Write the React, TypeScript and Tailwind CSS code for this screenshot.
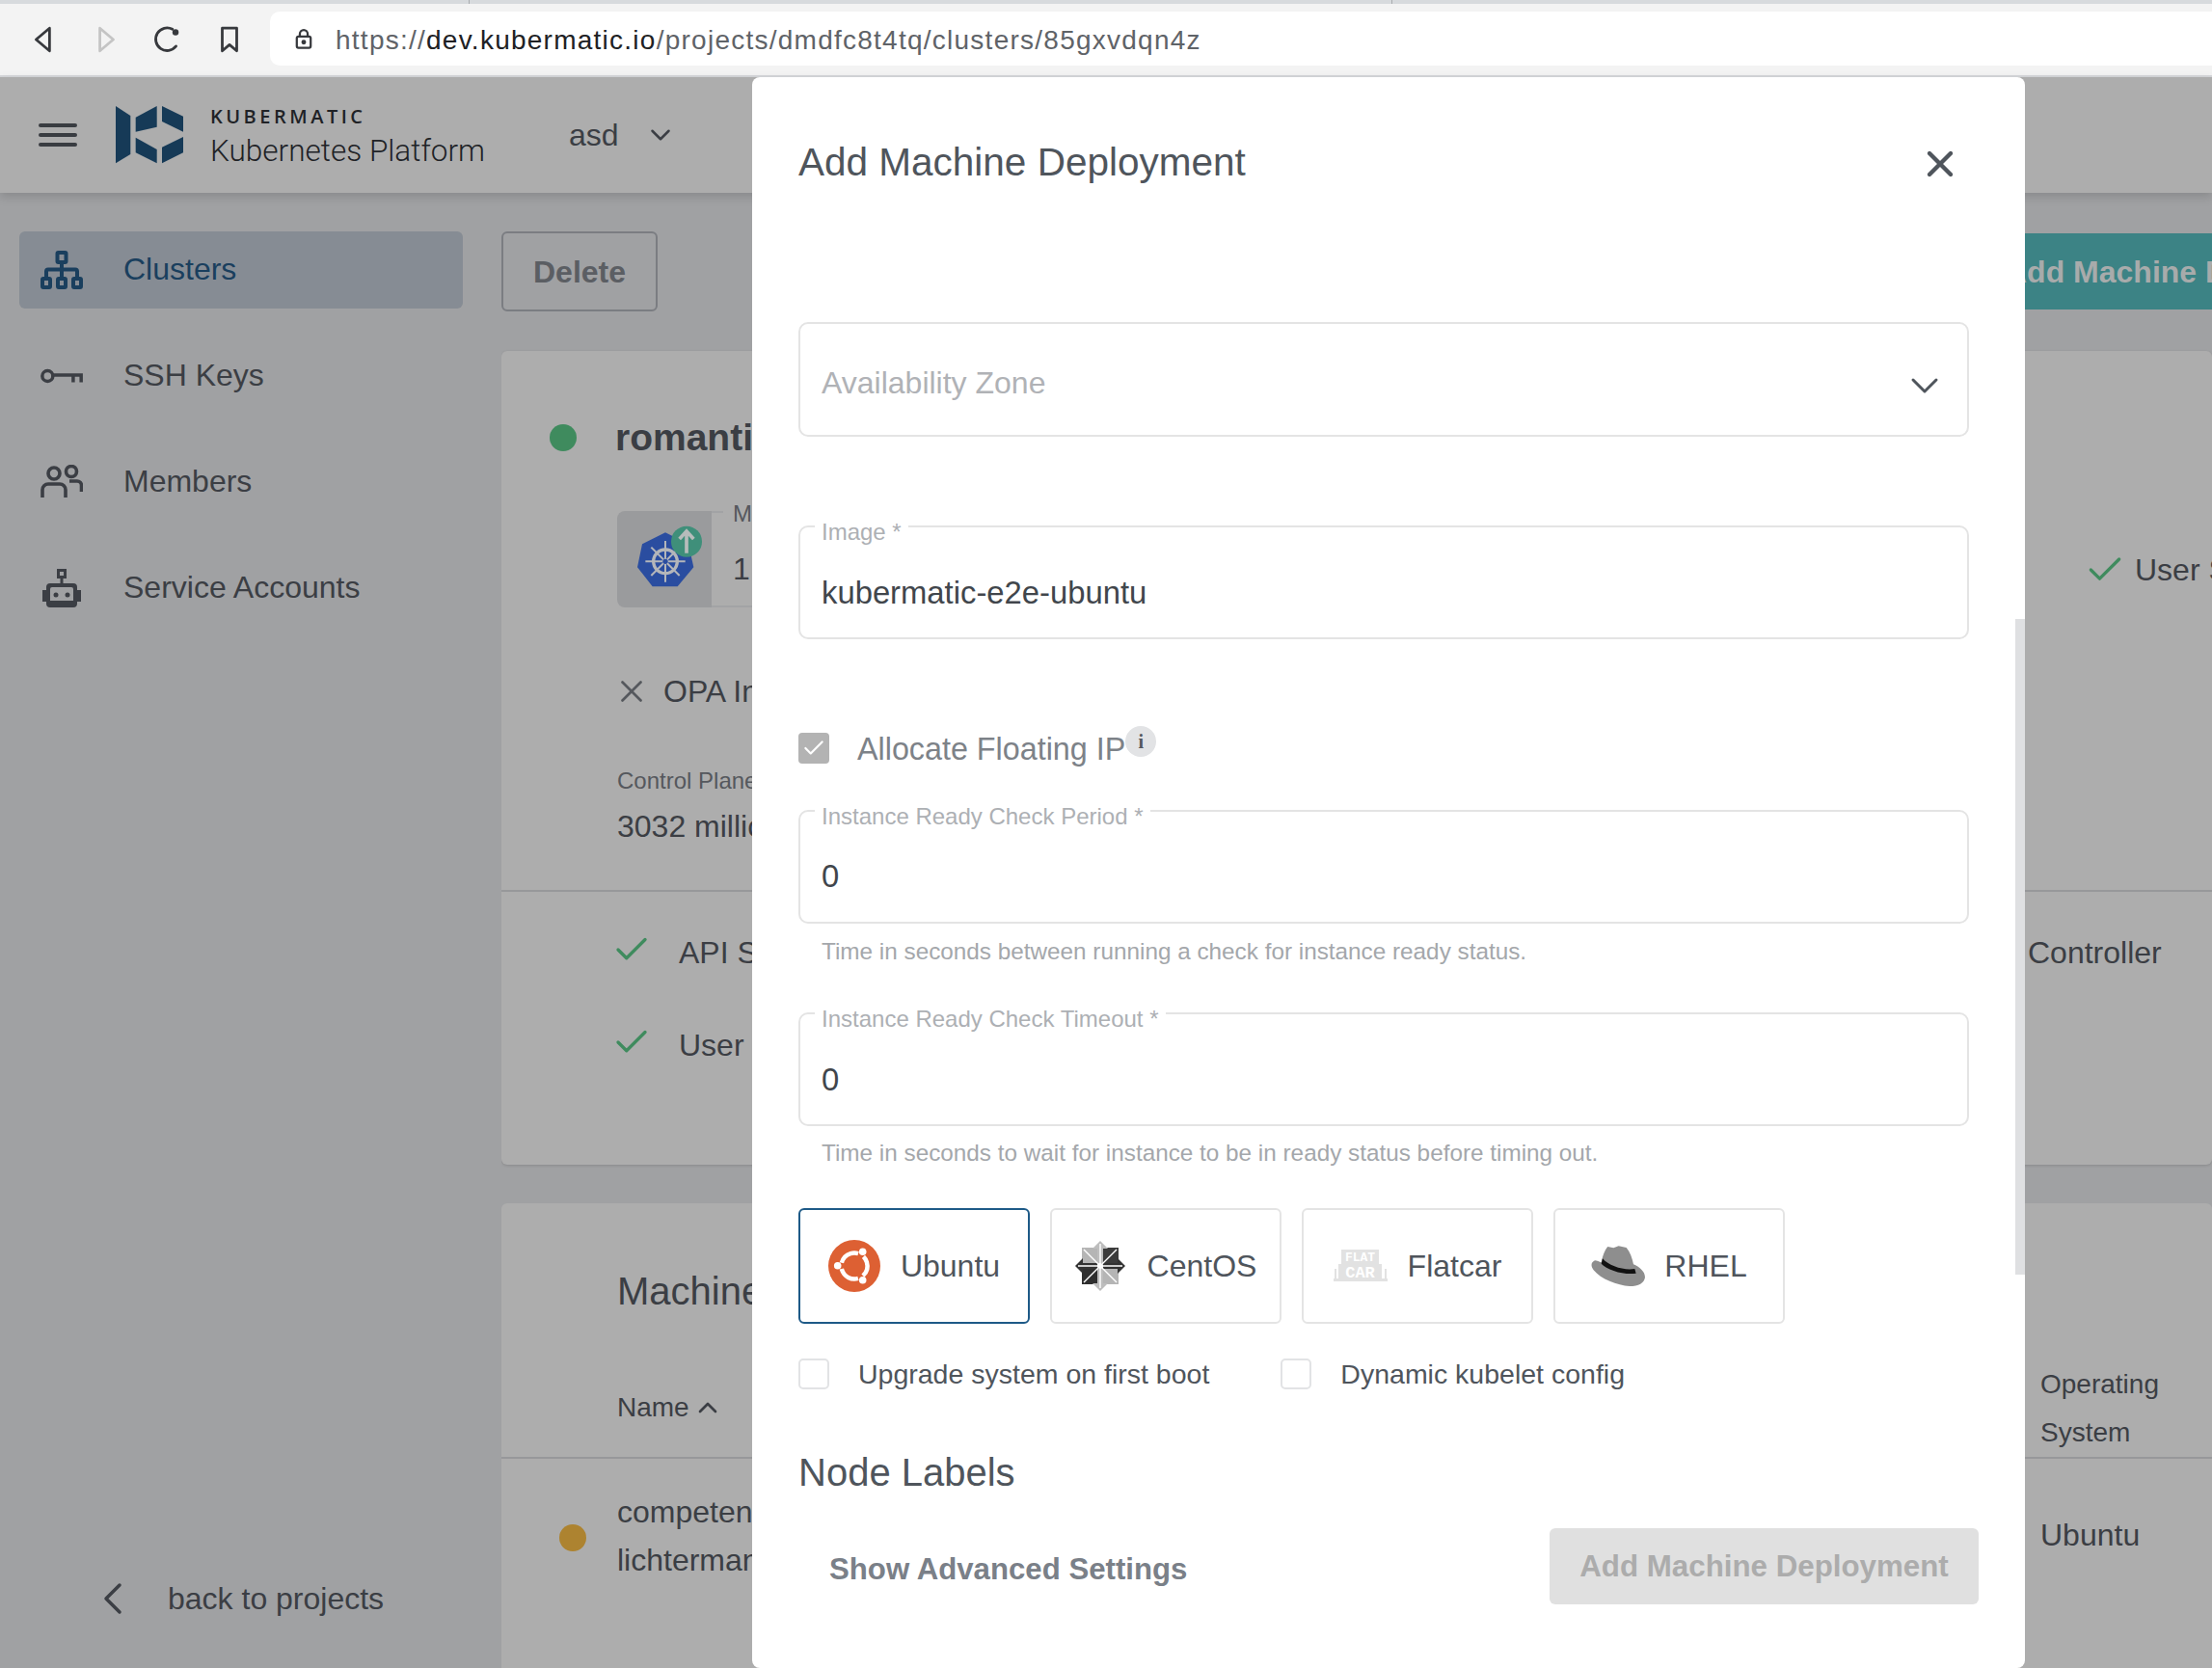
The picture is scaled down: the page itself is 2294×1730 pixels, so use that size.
import { ChevronDown, ChevronLeft, ChevronUp, Check, X } from "lucide-react";
import type { ReactNode } from "react";

const font = "font-['Liberation_Sans',Arial,sans-serif]";

const ClustersIcon = () => (
  <svg viewBox="0 0 44 40" className="w-[44px] h-[40px]" fill="none" stroke="currentColor" strokeWidth="4">
    <rect x="17.500" y="2" width="9" height="10" rx="1" />
    <path d="M22 12v17M6 29v-7.500a2 2 0 0 1 2-2h28a2 2 0 0 1 2 2V29" />
    <rect x="2" y="29" width="8" height="9" rx="1" />
    <rect x="18" y="29" width="8" height="9" rx="1" />
    <rect x="34" y="29" width="8" height="9" rx="1" />
  </svg>
);

const KeyIcon = () => (
  <svg viewBox="0 0 48 20" className="w-[48px] h-[20px]" fill="none" stroke="currentColor" strokeWidth="3.800">
    <circle cx="8" cy="10" r="6" />
    <path d="M14 9h32v8M37 9v8" />
  </svg>
);

const MembersIcon = () => (
  <svg viewBox="0 0 44 36" className="w-[44px] h-[36px]" fill="none" stroke="currentColor" strokeWidth="3.600">
    <circle cx="14" cy="9" r="6" />
    <circle cx="32" cy="7" r="5.500" />
    <path d="M2 34v-8a6 6 0 0 1 6-6h12a6 6 0 0 1 6 6v8M30 17h8a4.500 4.500 0 0 1 4.500 4.500V28" />
  </svg>
);

const RobotIcon = () => (
  <svg viewBox="0 0 44 40" className="w-[44px] h-[40px]" fill="currentColor">
    <path d="M17 0h10v10h-3.500v5H34a4 4 0 0 1 4 4v3h4v12h-4v2a4 4 0 0 1-4 4H10a4 4 0 0 1-4-4v-2H2V22h4v-3a4 4 0 0 1 4-4h10.500v-5H17z" />
    <rect x="20" y="3" width="4" height="4" fill="#a0a1a3" />
    <rect x="10" y="19" width="24" height="16" rx="2" fill="#a0a1a3" />
    <rect x="8" y="33" width="28" height="3" />
    <circle cx="16" cy="27" r="2.500" />
    <circle cx="28" cy="27" r="2.500" />
  </svg>
);

const Logo = () => (
  <svg viewBox="10 10 70 60" className="w-[70px] h-[60px]" fill="#163a57">
    <polygon points="10,10 25.300,20 25.300,60 10,69.300" />
    <polygon points="30.700,21.700 52.700,10 52.700,31.700 30.700,36.700" />
    <polygon points="58,10 80,20.700 80,36.700 58,26" />
    <polygon points="30.700,42.700 52.700,55 52.700,69.300 30.700,58.300" />
    <polygon points="58,52.700 80,42 80,58.300 58,69.300" />
  </svg>
);

const UbuntuLogo = () => (
  <svg viewBox="0 0 54 54" className="w-[54px] h-[54px] shrink-0">
    <circle cx="27" cy="27" r="27" fill="#dd6033" />
    <circle cx="27" cy="27" r="13.500" fill="none" stroke="#fff" strokeWidth="4.500" strokeDasharray="22 6.270" transform="rotate(73 27 27)" />
    <circle cx="35.700" cy="12.300" r="3.800" fill="#fff" />
    <circle cx="9.700" cy="26.700" r="3.800" fill="#fff" />
    <circle cx="35.700" cy="41.700" r="3.800" fill="#fff" />
  </svg>
);

const CentosLogo = () => (
  <svg viewBox="0 0 52 52" className="w-[52px] h-[52px] shrink-0">
    <rect x="7" y="7" width="18" height="18" fill="#b5b5b5" />
    <rect x="27" y="7" width="18" height="18" fill="#3c3c3c" />
    <rect x="7" y="27" width="18" height="18" fill="#2f2f2f" />
    <rect x="27" y="27" width="18" height="18" fill="#b5b5b5" />
    <polygon points="26,0 34,8 29,8 29,23 23,23 23,8 18,8" fill="#bdbdbd" />
    <polygon points="26,52 34,44 29,44 29,29 23,29 23,44 18,44" fill="#bdbdbd" />
    <polygon points="0,26 8,18 8,23 23,23 23,29 8,29 8,34" fill="#333" />
    <polygon points="52,26 44,18 44,23 29,23 29,29 44,29 44,34" fill="#333" />
    <path d="M26 3v46M3 26h46M9 9l34 34M43 9L9 43" stroke="#fff" strokeWidth="1.400" />
    <circle cx="26" cy="26" r="3" fill="#fff" />
  </svg>
);

const FlatcarLogo = () => (
  <svg viewBox="0 0 56 34" className="w-[56px] h-[34px] shrink-0">
    <rect x="8" y="0" width="39" height="15" fill="#e2e2e2" />
    <rect x="5" y="15" width="45" height="16" fill="#e2e2e2" />
    <rect x="0" y="30" width="56" height="3" fill="#e2e2e2" />
    <rect x="1" y="20" width="2" height="10" fill="#e2e2e2" />
    <rect x="53" y="20" width="2" height="10" fill="#e2e2e2" />
    <text x="27.500" y="12" textAnchor="middle" fontSize="13" fontWeight="700" fill="#fff" fontFamily="Liberation Mono, monospace">FLAT</text>
    <text x="27.500" y="28.500" textAnchor="middle" fontSize="17" fontWeight="700" fill="#fff" fontFamily="Liberation Mono, monospace">CAR</text>
  </svg>
);

const RhelLogo = () => (
  <svg viewBox="0 0 168 126" className="w-[56px] h-[42px] shrink-0">
    <path d="M52 3L70 7L86 1L110 6C122 20 128 38 132 58C150 66 168 80 168 98C166 116 148 126 120 126C82 124 30 104 8 76C-2 62 0 52 12 46C18 46 26 50 32 52C36 34 42 14 52 3Z" fill="#8e8e8e" />
    <path d="M36 40C56 64 104 78 136 72L140 86C104 92 50 76 32 56Z" fill="#111" />
  </svg>
);

const KubeIcon = () => (
  <svg viewBox="90 60 210 195" className="w-[70px] h-[65px]">
    <polygon points="180,82 252,118 268,190 218,250 140,250 93,190 108,118" fill="#2a4da0" />
    <g stroke="#b4b6ba" fill="none">
      <circle cx="180" cy="172" r="37" strokeWidth="10" />
      <path d="M180 108v128M118 172h124M136 128l88 88M224 128l-88 88" strokeWidth="6" />
    </g>
    <circle cx="180" cy="172" r="8" fill="#2a4da0" />
    <circle cx="246" cy="110" r="48" fill="#3f8f7a" />
    <path d="M246 146V80M224 102l22-24 22 24" stroke="#b7bcbb" strokeWidth="11" fill="none" />
  </svg>
);

const SideItem = ({ icon, label, active }: { icon: ReactNode; label: string; active?: boolean }) => (
  <div className={active ? "flex items-center gap-[42px] h-[80px] pl-[22px] rounded-[6px] bg-[#868c94] text-[#1a3f5e]" : "flex items-center gap-[42px] h-[80px] pl-[22px] text-[#3b3e44]"}>
    <span className="w-[44px] flex justify-center">{icon}</span>
    <span className="text-[32px] leading-[40px] -mt-[3px]">{label}</span>
  </div>
);

const Field = ({ label, value, pad }: { label: string; value: string; pad: string }) => (
  <div className={`relative h-[118px] flex items-center pl-[22px] border-2 border-[#e4e4e4] rounded-[10px] text-[32.800px] leading-[40px] text-[#41464c] ${pad}`}>
    <span className="absolute left-[15px] -top-[7px] px-[7px] bg-white text-[24px] leading-[24px] text-[#adb0b4]">{label}</span>
    <span>{value}</span>
  </div>
);

const OsTile = ({ logo, name, gap, active }: { logo: ReactNode; name: string; gap: string; active?: boolean }) => (
  <div className={`w-[240px] h-[120px] flex items-center justify-center rounded-[6px] border-2 text-[32px] leading-[40px] text-[#4f555c] ${gap} ${active ? "border-[#1e5a87]" : "border-[#e4e4e4]"}`}>
    {logo}
    <span>{name}</span>
  </div>
);

const CheckItem = ({ label }: { label: string }) => (
  <div className="flex items-center gap-[30px]">
    <span className="w-[32px] h-[32px] rounded-[5px] border-2 border-[#e2e3e5]" />
    <span className="text-[28.500px] leading-[32px] text-[#4f555c] whitespace-nowrap">{label}</span>
  </div>
);

const ToolbarIcon = ({ children }: { children: ReactNode }) => (
  <svg viewBox="0 0 28 28" width={30} height={30} fill="none" stroke="currentColor" strokeWidth="2.600" strokeLinejoin="round" strokeLinecap="round">
    {children}
  </svg>
);

export default function App() {
  return (
    <div className={`h-screen w-full overflow-hidden flex flex-col relative bg-[#a0a1a3] ${font}`}>
      {/* browser chrome */}
      <div className="h-[4px] shrink-0 bg-[#d7dadd] flex">
        <div className="w-[487px] border-r border-[#a9acaf]" />
        <div className="w-[957px] border-r border-[#a9acaf]" />
      </div>
      <div className="h-[76px] shrink-0 bg-[#f3f3f3] border-b-2 border-[#d5d7da] flex items-center">
        <div className="w-[280px] shrink-0 flex items-center pl-[31px] gap-[34px] text-[#37393d]">
          <ToolbarIcon><path d="M19 3L6 14l13 11z" /></ToolbarIcon>
          <span className="text-[#c4c4c4]"><ToolbarIcon><path d="M8 3l13 11L8 25z" /></ToolbarIcon></span>
          <ToolbarIcon>
            <path d="M22 20.500A11 11 0 1 1 18.500 4" />
            <circle cx="21.500" cy="7" r="3" fill="currentColor" stroke="none" />
          </ToolbarIcon>
          <ToolbarIcon><path d="M7 3h14v22l-7-6-7 6z" /></ToolbarIcon>
        </div>
        <div className="flex-1 h-[56px] mb-[2px] bg-white rounded-l-[10px] flex items-center pl-[26px] gap-[24px]">
          <svg viewBox="0 0 20 24" className="w-[18px] h-[23px] mt-[1px] text-[#37393d]" fill="none" stroke="currentColor" strokeWidth="2.500">
            <rect x="2" y="9" width="16" height="13" rx="2" />
            <path d="M5.500 9V6a4.500 4.500 0 0 1 9 0v3" />
            <circle cx="10" cy="15.500" r="1.500" fill="currentColor" />
          </svg>
          <span className="text-[28px] leading-[36px] mt-[3px] tracking-[1.25px] text-[#5f6368] whitespace-nowrap">
            https://<span className="text-[#202124]">dev.kubermatic.io</span>/projects/dmdfc8t4tq/clusters/85gxvdqn4z
          </span>
        </div>
      </div>

      {/* app header */}
      <div className="h-[120px] shrink-0 bg-[#adadad] shadow-[0_4px_10px_rgba(0,0,0,0.15)] z-10 flex items-center pl-[40px]">
        <div className="w-[40px] flex flex-col gap-[6px]">
          <div className="h-[4px] bg-[#393c41] rounded-full" />
          <div className="h-[4px] bg-[#393c41] rounded-full" />
          <div className="h-[4px] bg-[#393c41] rounded-full" />
        </div>
        <div className="ml-[40px]"><Logo /></div>
        <div className="ml-[28px] w-[372px] pt-[4px] text-[#202226]">
          <div className="font-['Open_Sans',sans-serif] font-semibold text-[20px] leading-[24px] tracking-[3.500px]">KUBERMATIC</div>
          <div className="font-['Roboto',sans-serif] font-light text-[31.500px] leading-[38px] mt-[5px] whitespace-nowrap">Kubernetes Platform</div>
        </div>
        <span className="text-[32px] leading-[40px] text-[#3b3e44]">asd</span>
        <ChevronDown className="ml-[26px] w-[34px] h-[34px] text-[#3b3e44]" strokeWidth={1.8} />
      </div>

      {/* page behind the dialog */}
      <div className="flex-1 flex min-h-0">
        <aside className="w-[520px] shrink-0 flex flex-col pt-[40px] pl-[20px] pb-[52px]">
          <div className="w-[460px] flex flex-col gap-[30px]">
            <SideItem active icon={<ClustersIcon />} label="Clusters" />
            <SideItem icon={<KeyIcon />} label="SSH Keys" />
            <SideItem icon={<MembersIcon />} label="Members" />
            <SideItem icon={<RobotIcon />} label="Service Accounts" />
          </div>
          <div className="mt-auto flex items-center h-[40px] pl-[69px] text-[#3b3e44]">
            <ChevronLeft className="w-[56px] h-[56px] shrink-0" strokeWidth={1.5} />
            <span className="ml-[29px] text-[32px] leading-[40px]">back to projects</span>
          </div>
        </aside>

        <main className="flex-1 min-w-0 overflow-hidden pt-[40px]">
          <div className="flex h-[83px] items-center">
            <div className="w-[162px] h-[83px] shrink-0 flex items-center justify-center border-2 border-[#7b7d82] rounded-[6px] text-[32px] font-bold text-[#5b5e63]">Delete</div>
            <div className="ml-[1358px] w-[400px] h-[79px] pl-[39px] flex items-center bg-[#3c8385] text-[32px] font-bold text-[#a8abab] whitespace-nowrap shrink-0">Add Machine Deployment</div>
          </div>

          {/* cluster card */}
          <section className="mt-[41px] h-[844px] bg-[#adadad] rounded-[6px] shadow-[0_1px_3px_rgba(0,0,0,0.15)]">
            <div className="h-[561px] border-b-2 border-[#97989a] text-[#3b3e44]">
              <div className="pt-[66px] pl-[50px] flex items-center gap-[40px]">
                <span className="w-[28px] h-[28px] rounded-full bg-[#3f8b5e]" />
                <span className="h-[48px] text-[39px] leading-[48px] font-bold whitespace-nowrap">romantic</span>
              </div>
              <div className="mt-[52px] ml-[120px] h-[100px] flex">
                <div className="w-[98px] h-[100px] shrink-0 bg-[#9a9b9d] rounded-l-[8px] pl-[20px] pt-[15px]"><KubeIcon /></div>
                <div className="w-[1423px] shrink-0 pl-[22px] relative">
                  <div className="absolute left-0 top-0 w-[12px] h-[2px] bg-[#a2a3a5]" />
                  <div className="absolute left-0 bottom-0 w-[60px] h-[2px] bg-[#a2a3a5]" />
                  <span className="absolute left-[22px] -top-[11px] whitespace-nowrap text-[24px] leading-[28px] text-[#55585d]">M</span>
                  <div className="text-[32px] leading-[36px] mt-[42px]">1</div>
                </div>
                <div className="h-[44px] mt-[39px] flex items-center gap-[9px] whitespace-nowrap">
                  <Check className="w-[44px] h-[44px] text-[#3f8b5e]" strokeWidth={1.8} />
                  <span className="text-[32px] leading-[36px]">User SSH Key Agent</span>
                </div>
              </div>
              <div className="mt-[67px] ml-[116px] h-[40px] flex items-center gap-[14px] text-[32px]">
                <X className="w-[38px] h-[38px] text-[#55585d]" strokeWidth={1.7} />
                <span>OPA Int</span>
              </div>
              <div className="mt-[58px] ml-[120px] h-[30px] text-[24px] leading-[30px] text-[#55585d]">Control Plane</div>
              <div className="mt-[12px] ml-[120px] h-[40px] text-[32px] leading-[40px]">3032 millicores</div>
            </div>
            <div className="pt-[43px] pl-[114px] text-[#3b3e44] text-[32px]">
              <div className="h-[40px] flex items-center whitespace-nowrap">
                <div className="w-[1469px] shrink-0 flex items-center gap-[28px]">
                  <Check className="w-[42px] h-[42px] -mt-[6px] text-[#3f8b5e]" strokeWidth={1.9} />
                  <span>API Server</span>
                </div>
                <span>Controller</span>
              </div>
              <div className="mt-[56px] h-[40px] flex items-center gap-[28px] whitespace-nowrap">
                <Check className="w-[42px] h-[42px] -mt-[6px] text-[#3f8b5e]" strokeWidth={1.9} />
                <span>User</span>
              </div>
            </div>
          </section>

          {/* machine deployments */}
          <section className="mt-[40px] h-[500px] bg-[#adadad] rounded-[6px] text-[#3b3e44]">
            <div className="pt-[67px] ml-[120px] text-[40px] leading-[48px] whitespace-nowrap">Machine</div>
            <div className="mt-[47px] h-[103px] border-b-2 border-[#97989a] pl-[120px] flex items-center text-[28px]">
              <div className="w-[1476px] shrink-0 -mt-[2px] flex items-center gap-[3px]">
                <span>Name</span>
                <ChevronUp className="w-[32px] h-[32px]" strokeWidth={2} />
              </div>
              <div className="leading-[50px]">Operating<br />System</div>
            </div>
            <div className="mt-[30px] pl-[60px] flex items-center text-[32px]">
              <span className="w-[28px] h-[28px] mt-[4px] rounded-full bg-[#ad8330] shrink-0" />
              <div className="ml-[32px] w-[1476px] shrink-0 leading-[50px] whitespace-nowrap">competent-<br />lichterman</div>
              <span className="-mt-[2px]">Ubuntu</span>
            </div>
          </section>
        </main>
      </div>

      {/* dialog */}
      <div className="absolute left-[780px] top-[80px] w-[1320px] h-[1650px] z-20 bg-white rounded-[8px] pl-[48px] pr-[58px] pt-[64px] overflow-hidden">
        <div className="absolute right-0 top-[562px] w-[10px] h-[680px] bg-[#dfe0e2]" />
        <div className="h-[48px] flex items-center justify-between">
          <h2 className="text-[40.500px] leading-[48px] text-[#4f555c]">Add Machine Deployment</h2>
          <X className="mr-[8px] w-[44px] h-[44px] text-[#4f555c] mt-[4px]" strokeWidth={2.4} />
        </div>

        <div className="mt-[142px] h-[119px] border-2 border-[#e4e4e4] rounded-[10px] pl-[22px] pr-[20px] pt-[6px] flex items-center justify-between text-[32px] leading-[40px] text-[#b0b2b6]">
          <span>Availability Zone</span>
          <ChevronDown className="w-[48px] h-[48px] mt-[6px] text-[#4f555c]" strokeWidth={1.5} />
        </div>

        <div className="mt-[92px]"><Field label="Image *" value="kubermatic-e2e-ubuntu" pad="pt-[22px]" /></div>

        <div className="mt-[96px] h-[34px] flex items-center">
          <span className="w-[32px] h-[32px] rounded-[4px] bg-[#b3b3b3] flex items-center justify-center">
            <Check className="w-[26px] h-[26px] text-white" strokeWidth={2} />
          </span>
          <span className="ml-[29px] mt-[1px] text-[32.300px] leading-[40px] text-[#7d8288]">Allocate Floating IP</span>
          <span className="self-start -mt-[6px] w-[32px] h-[32px] rounded-full bg-[#e2e3e5] text-[#55585d] text-[20px] font-bold font-['Liberation_Serif',serif] flex items-center justify-center">i</span>
        </div>

        <div className="mt-[47px]"><Field label="Instance Ready Check Period *" value="0" pad="pt-[20px]" /></div>
        <p className="mt-[14px] h-[30px] pl-[24px] text-[24.300px] leading-[30px] text-[#a4a7ab]">Time in seconds between running a check for instance ready status.</p>

        <div className="mt-[48px]"><Field label="Instance Ready Check Timeout *" value="0" pad="pt-[22px]" /></div>
        <p className="mt-[13px] h-[30px] pl-[24px] text-[24.300px] leading-[30px] text-[#a4a7ab]">Time in seconds to wait for instance to be in ready status before timing out.</p>

        <div className="mt-[42px] flex gap-[21px]">
          <OsTile active logo={<UbuntuLogo />} name="Ubuntu" gap="gap-[21px]" />
          <OsTile logo={<CentosLogo />} name="CentOS" gap="gap-[23px]" />
          <OsTile logo={<FlatcarLogo />} name="Flatcar" gap="gap-[21px]" />
          <OsTile logo={<RhelLogo />} name="RHEL" gap="gap-[20px]" />
        </div>

        <div className="mt-[36px] h-[32px] flex gap-[74px]">
          <CheckItem label="Upgrade system on first boot" />
          <CheckItem label="Dynamic kubelet config" />
        </div>

        <h3 className="mt-[62px] text-[40px] leading-[48px] text-[#4f555c]">Node Labels</h3>

        <div className="mt-[34px] -mr-[10px] flex items-center justify-between">
          <span className="ml-[32px] mt-[6px] text-[31.200px] leading-[40px] font-bold text-[#7a8088]">Show Advanced Settings</span>
          <div className="w-[445px] h-[79px] pt-[2px] rounded-[6px] bg-[#e0e0e0] flex items-center justify-center text-[31.300px] font-bold text-[#acacac]">Add Machine Deployment</div>
        </div>
      </div>
    </div>
  );
}
